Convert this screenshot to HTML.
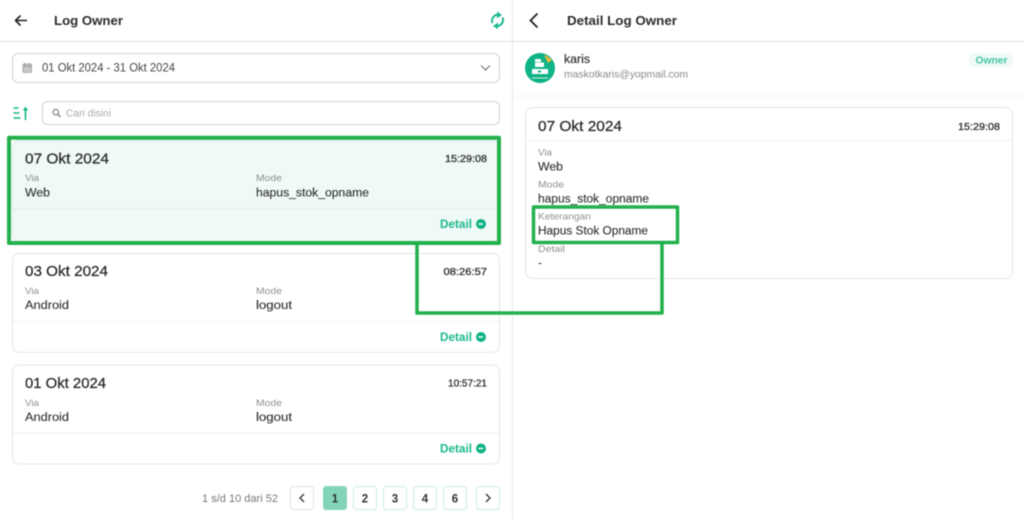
<!DOCTYPE html>
<html lang="id">
<head>
<meta charset="utf-8">
<title>Log Owner</title>
<style>
html,body{margin:0;padding:0;background:#fff;width:1024px;height:519px;overflow:hidden}
svg{display:block;filter:blur(.4px)}
text{font-family:"Liberation Sans","DejaVu Sans",sans-serif;}
.t{font-weight:700;font-size:12.5px;fill:#2c2c2c}
.d{font-size:14.5px;fill:#2a2a2a;stroke:#2a2a2a;stroke-width:.25px}
.h{font-size:10.5px;fill:#2e2e2e;stroke:#2e2e2e;stroke-width:.3px}
.l{font-size:9.5px;fill:#8f8f8f}
.v{font-size:11.5px;fill:#333;stroke:#333;stroke-width:.12px}
.g{font-size:11.5px;fill:#1cb98e;font-weight:700}
.p{font-size:11.5px;fill:#333;font-weight:700;text-anchor:middle}
.c{fill:#fff;stroke:#e6e6e6;stroke-width:1}
.b{fill:#fff;stroke:#c9efe3;stroke-width:1}
</style>
</head>
<body>
<svg width="1024" height="519" viewBox="0 0 1024 519" xmlns="http://www.w3.org/2000/svg">
<rect width="1024" height="519" fill="#fff"/>
<rect x="512" y="0" width="1" height="519" fill="#e8e8e8"/>
<rect x="0" y="41" width="1024" height="1" fill="#dedede"/>

<!-- left header -->
<path d="M27 20.5H16M20.5 15.5L15.5 20.5L20.5 25.5" fill="none" stroke="#222" stroke-width="1.6"/>
<text class="t" x="54" y="25" textLength="69" lengthAdjust="spacingAndGlyphs">Log Owner</text>
<g fill="none" stroke="#1cb98e" stroke-width="2">
<path d="M492.5 23A6 6 0 0 1 499 14.8"/>
<path d="M502.5 17.5A6 6 0 0 1 496 25.8"/>
</g>
<path d="M497 11.5L502 15L497 18.3ZM498 22.5L493 26L498 29.3Z" fill="#1cb98e"/>

<!-- date field -->
<rect x="12.5" y="53.5" width="487" height="29" rx="6" fill="#fff" stroke="#d2d2d2"/>
<rect x="23" y="64" width="8.5" height="8.5" rx="1" fill="#c9c9c9" stroke="#9a9a9a" stroke-width=".8"/>
<path d="M23 66.3H31.5M25 63V65M29.5 63V65" stroke="#8c8c8c" stroke-width=".8" fill="none"/>
<text x="42" y="71.5" font-size="11.5" fill="#444" textLength="133" lengthAdjust="spacingAndGlyphs">01 Okt 2024 - 31 Okt 2024</text>
<path d="M481 65.5L485.5 70L490 65.5" fill="none" stroke="#777" stroke-width="1.2"/>

<!-- sort + search -->
<path d="M13.5 108H18.5M13.5 113H19.5M13.5 118H20.5" stroke="#12b886" stroke-width="1.6" fill="none"/>
<path d="M25.5 120V108" stroke="#12b886" stroke-width="1.6" fill="none"/>
<path d="M22.8 110.5L25.5 106.5L28.2 110.5Z" fill="#12b886"/>
<rect x="42.5" y="101.5" width="457" height="23" rx="5" fill="#fff" stroke="#d2d2d2"/>
<circle cx="55.8" cy="112.2" r="2.8" fill="none" stroke="#7c7c7c" stroke-width="1.1"/>
<path d="M57.8 114.2L60.6 117" stroke="#7c7c7c" stroke-width="1.3"/>
<text x="66" y="116.5" font-size="10" fill="#a8a8a8" textLength="45" lengthAdjust="spacingAndGlyphs">Cari disini</text>

<!-- card 1 -->
<rect x="12.5" y="140.5" width="487" height="101" rx="7" fill="#eff9f6" stroke="#e0e9e6"/>
<rect x="13" y="208.5" width="486" height="1" fill="#e3ece9"/>
<text class="d" x="25" y="163.5" textLength="84" lengthAdjust="spacingAndGlyphs">07 Okt 2024</text>
<text class="h" x="445" y="162" textLength="42" lengthAdjust="spacingAndGlyphs">15:29:08</text>
<text class="l" x="25" y="181" textLength="14" lengthAdjust="spacingAndGlyphs">Via</text>
<text class="v" x="25" y="196.5" textLength="25" lengthAdjust="spacingAndGlyphs">Web</text>
<text class="l" x="256" y="181" textLength="26" lengthAdjust="spacingAndGlyphs">Mode</text>
<text class="v" x="256" y="196.5" textLength="113" lengthAdjust="spacingAndGlyphs">hapus_stok_opname</text>
<text class="g" x="440" y="228" textLength="32" lengthAdjust="spacingAndGlyphs">Detail</text>
<circle cx="481" cy="224" r="5" fill="#10b386"/>
<path d="M478.5 224H483" stroke="#fff" stroke-width="1.4"/>

<!-- card 2 -->
<rect class="c" x="12.5" y="253.5" width="487" height="99" rx="7"/>
<rect x="13" y="321" width="486" height="1" fill="#efefef"/>
<text class="d" x="25" y="276" textLength="83" lengthAdjust="spacingAndGlyphs">03 Okt 2024</text>
<text class="h" x="443.5" y="275" textLength="43.5" lengthAdjust="spacingAndGlyphs">08:26:57</text>
<text class="l" x="25" y="294" textLength="14" lengthAdjust="spacingAndGlyphs">Via</text>
<text class="v" x="25" y="309" textLength="44" lengthAdjust="spacingAndGlyphs">Android</text>
<text class="l" x="256" y="294" textLength="26" lengthAdjust="spacingAndGlyphs">Mode</text>
<text class="v" x="256" y="309" textLength="36" lengthAdjust="spacingAndGlyphs">logout</text>
<text class="g" x="440" y="341" textLength="32" lengthAdjust="spacingAndGlyphs">Detail</text>
<circle cx="481" cy="337" r="5" fill="#10b386"/>
<path d="M478.5 337H483" stroke="#fff" stroke-width="1.4"/>

<!-- card 3 -->
<rect class="c" x="12.5" y="365" width="487" height="99" rx="7"/>
<rect x="13" y="432.5" width="486" height="1" fill="#efefef"/>
<text class="d" x="25" y="388" textLength="81" lengthAdjust="spacingAndGlyphs">01 Okt 2024</text>
<text class="h" x="448" y="386.5" textLength="39" lengthAdjust="spacingAndGlyphs">10:57:21</text>
<text class="l" x="25" y="406" textLength="14" lengthAdjust="spacingAndGlyphs">Via</text>
<text class="v" x="25" y="421" textLength="44" lengthAdjust="spacingAndGlyphs">Android</text>
<text class="l" x="256" y="406" textLength="26" lengthAdjust="spacingAndGlyphs">Mode</text>
<text class="v" x="256" y="421" textLength="36" lengthAdjust="spacingAndGlyphs">logout</text>
<text class="g" x="440" y="452.5" textLength="32" lengthAdjust="spacingAndGlyphs">Detail</text>
<circle cx="481" cy="448.5" r="5" fill="#10b386"/>
<path d="M478.5 448.5H483" stroke="#fff" stroke-width="1.4"/>

<!-- pagination -->
<text x="202" y="502" font-size="11" fill="#777" textLength="76" lengthAdjust="spacingAndGlyphs">1 s/d 10 dari 52</text>
<rect x="290.5" y="486.5" width="23" height="23" rx="3" fill="#fff" stroke="#e2e2e2"/>
<path d="M304 494L300 498L304 502" fill="none" stroke="#333" stroke-width="1.3"/>
<rect x="323" y="486" width="24" height="24" rx="3" fill="#84d4bb"/>
<text class="p" x="335" y="502.5">1</text>
<rect class="b" x="353.5" y="486.5" width="23" height="23" rx="3"/>
<text class="p" x="365" y="502.5">2</text>
<rect class="b" x="383.5" y="486.5" width="23" height="23" rx="3"/>
<text class="p" x="395" y="502.5">3</text>
<rect class="b" x="413.5" y="486.5" width="23" height="23" rx="3"/>
<text class="p" x="425" y="502.5">4</text>
<rect class="b" x="443.5" y="486.5" width="23" height="23" rx="3"/>
<text class="p" x="455" y="502.5">6</text>
<rect class="b" x="476.5" y="486.5" width="23" height="23" rx="3"/>
<path d="M486 494L490 498L486 502" fill="none" stroke="#333" stroke-width="1.3"/>

<!-- right header -->
<path d="M537.5 13.5L530.5 20.5L537.5 27.5" fill="none" stroke="#222" stroke-width="1.8"/>
<text class="t" x="567" y="25" textLength="110" lengthAdjust="spacingAndGlyphs">Detail Log Owner</text>

<!-- profile -->
<circle cx="540" cy="68" r="15" fill="#10b386"/>
<path d="M544 54.5L552 59.5L548 63Z" fill="#f6b73c"/>
<rect x="535" y="59" width="6" height="3" fill="#fff"/>
<rect x="535" y="62.5" width="9" height="4.5" fill="#fff"/>
<rect x="532" y="69" width="16" height="5" fill="#fff"/>
<rect x="538" y="70.5" width="3" height="2" fill="#10b386"/>
<rect x="532" y="77.5" width="16" height="1" fill="#c9efe3"/>
<text x="564" y="63" font-size="11.5" fill="#333" stroke="#333" stroke-width=".2" textLength="26" lengthAdjust="spacingAndGlyphs">karis</text>
<text x="564" y="77.5" font-size="10.5" fill="#8a8a8a" textLength="124" lengthAdjust="spacingAndGlyphs">maskotkaris@yopmail.com</text>
<rect x="969" y="53" width="44" height="14" rx="4" fill="#eff9f6"/>
<text x="975.5" y="63.5" font-size="10" font-weight="700" fill="#44c7a2" textLength="32" lengthAdjust="spacingAndGlyphs">Owner</text>
<rect x="513" y="95" width="511" height="5" fill="#fafafa"/>

<!-- detail card -->
<rect class="c" x="525.5" y="107.5" width="487" height="171" rx="7"/>
<rect x="526" y="140" width="486" height="1" fill="#efefef"/>
<text class="d" x="538" y="131" textLength="84" lengthAdjust="spacingAndGlyphs">07 Okt 2024</text>
<text class="h" x="958" y="130" textLength="42" lengthAdjust="spacingAndGlyphs">15:29:08</text>
<text class="l" x="538" y="155.5" textLength="14" lengthAdjust="spacingAndGlyphs">Via</text>
<text class="v" x="538" y="170.5" textLength="25" lengthAdjust="spacingAndGlyphs">Web</text>
<text class="l" x="538" y="187.5" textLength="26" lengthAdjust="spacingAndGlyphs">Mode</text>
<text class="v" x="538" y="202.5" textLength="111" lengthAdjust="spacingAndGlyphs">hapus_stok_opname</text>
<text class="l" x="538" y="219.5" textLength="53" lengthAdjust="spacingAndGlyphs">Keterangan</text>
<text class="v" x="538" y="234.5" textLength="110" lengthAdjust="spacingAndGlyphs">Hapus Stok Opname</text>
<text class="l" x="538" y="252" textLength="27" lengthAdjust="spacingAndGlyphs">Detail</text>
<text class="v" x="538" y="266.5">-</text>

<!-- annotation -->
<g fill="none" stroke="#22b14c" stroke-linejoin="round">
<rect x="9" y="137.7" width="490" height="105.3" stroke-width="4"/>
<rect x="533.5" y="207" width="144" height="35.5" stroke-width="3.5"/>
<path d="M417 245V313H662V244" stroke-width="3.5"/>
</g>
</svg>
</body>
</html>
